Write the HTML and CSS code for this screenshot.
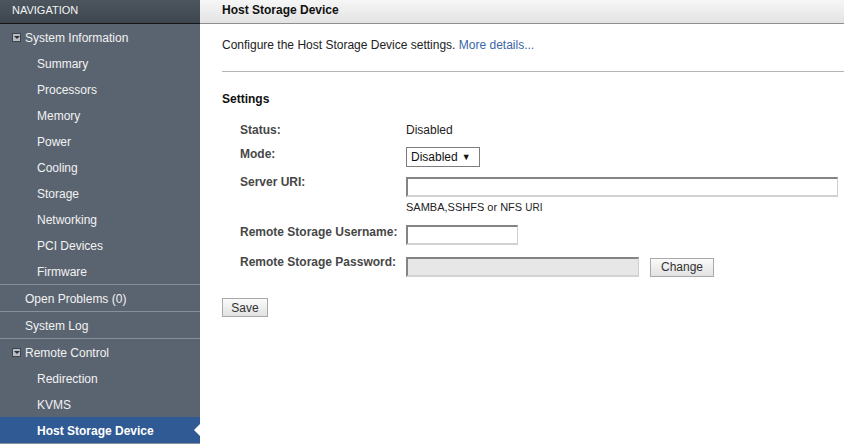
FILE: index.html
```html
<!DOCTYPE html>
<html lang="en">
<head>
<meta charset="utf-8">
<title>Host Storage Device</title>
<link rel="stylesheet" href="styles.css">
</head>
<body>
<div class="app">
  <aside class="sidebar">
    <div class="nav-header">NAVIGATION</div>
    <ul class="nav">
      <li class="nav-group">
        <div class="nav-item top"><span class="toggle"></span>System Information</div>
        <div class="nav-item sub">Summary</div>
        <div class="nav-item sub">Processors</div>
        <div class="nav-item sub">Memory</div>
        <div class="nav-item sub">Power</div>
        <div class="nav-item sub">Cooling</div>
        <div class="nav-item sub">Storage</div>
        <div class="nav-item sub">Networking</div>
        <div class="nav-item sub">PCI Devices</div>
        <div class="nav-item sub">Firmware</div>
      </li>
      <li class="nav-group">
        <div class="nav-item top">Open Problems (0)</div>
      </li>
      <li class="nav-group">
        <div class="nav-item top">System Log</div>
      </li>
      <li class="nav-group">
        <div class="nav-item top"><span class="toggle"></span>Remote Control</div>
        <div class="nav-item sub">Redirection</div>
        <div class="nav-item sub">KVMS</div>
        <div class="nav-item sub active">Host Storage Device</div>
      </li>
    </ul>
  </aside>
  <main class="main">
    <div class="page-header">Host Storage Device</div>
    <div class="content">
      <p class="intro">Configure the Host Storage Device settings. <a class="link" href="#">More details...</a></p>
      <hr class="rule">
      <h2 class="section-title">Settings</h2>
      <div class="form">
        <div class="row">
          <div class="label">Status:</div>
          <div class="value">Disabled</div>
        </div>
        <div class="row">
          <div class="label">Mode:</div>
          <div class="value"><button class="select" type="button">Disabled <span class="caret">&#9660;</span></button></div>
        </div>
        <div class="row">
          <div class="label label-up">Server URI:</div>
          <div class="value">
            <input class="field field-uri" type="text">
            <div class="hint">SAMBA,SSHFS or NFS <span class="hint-small">URI</span></div>
          </div>
        </div>
        <div class="row row-user">
          <div class="label">Remote Storage Username:</div>
          <div class="value"><input class="field field-user" type="text"></div>
        </div>
        <div class="row row-pass">
          <div class="label label-up">Remote Storage Password:</div>
          <div class="value inline">
            <input class="field field-pass" type="password" disabled>
            <button class="btn" type="button">Change</button>
          </div>
        </div>
      </div>
      <button class="btn btn-save" type="button">Save</button>
    </div>
  </main>
</div>
</body>
</html>
```

FILE: styles.css
```css
* { box-sizing: border-box; }
html, body { margin: 0; padding: 0; }
body {
  font-family: "Liberation Sans", Arial, sans-serif;
  font-size: 12px;
  color: #222;
  background: #fff;
  overflow: hidden;
}
.app {
  display: flex;
  height: 444px;
  width: 844px;
}

/* Sidebar */
.sidebar {
  width: 200px;
  flex: none;
  background: #5a6471;
  color: #f2f2f2;
}
.nav-header {
  height: 24px;
  padding-left: 12px;
  line-height: 21px;
  font-size: 11px;
  color: #f4f4f4;
  background: linear-gradient(#4d555e, #3d454e);
  border-bottom: 1px solid #151515;
}
.nav {
  list-style: none;
  margin: 0;
  padding: 0;
}
.nav-group {
  border-bottom: 1px solid #87909a;
}
.nav-item {
  height: 26px;
  padding-top: 2px;
  white-space: nowrap;
  display: flex;
  align-items: center;
}
.nav-item.top {
  padding-left: 25px;
  position: relative;
}
.nav-item.sub {
  padding-left: 37px;
}
.toggle {
  position: absolute;
  left: 12px;
  top: 9px;
  width: 9px;
  height: 9px;
  background: #b9bdc2;
  border: 1px solid #3e454d;
}
.toggle::after {
  content: "";
  position: absolute;
  left: 1px;
  top: 2px;
  border-left: 3px solid transparent;
  border-right: 3px solid transparent;
  border-top: 3px solid #2c3238;
}
.nav-item.active {
  background: #2f5a94;
  font-weight: bold;
  color: #fff;
  position: relative;
}
.nav-item.active::after {
  content: "";
  position: absolute;
  right: 0;
  top: 7px;
  border-top: 6px solid transparent;
  border-bottom: 6px solid transparent;
  border-right: 6px solid #fff;
}

/* Main */
.main {
  flex: 1;
  min-width: 0;
}
.page-header {
  height: 24px;
  padding-left: 22px;
  line-height: 20px;
  font-weight: bold;
  color: #111;
  background: linear-gradient(#f6f6f6, #e3e3e3);
  border-bottom: 1px solid #8f8f8f;
}
.content {
  padding-left: 22px;
}
.intro {
  margin: 14px 0 0;
  line-height: 14px;
}
.link {
  color: #3c66a6;
  text-decoration: none;
}
.rule {
  margin: 19px 0 0;
  border: 0;
  border-top: 1px solid #b4b4b4;
  height: 0;
}
.section-title {
  margin: 20px 0 0;
  font-size: 12px;
  line-height: 14px;
  font-weight: bold;
  color: #111;
}
.form {
  display: flex;
  flex-direction: column;
  gap: 10px;
  margin-top: 17px;
  padding-left: 18px;
}
.row {
  display: flex;
  align-items: flex-start;
}
.row-user { margin-top: 1px; }
.row-pass { margin-top: 2px; }
.label {
  width: 166px;
  flex: none;
  font-weight: bold;
  color: #474747;
  line-height: 14px;
}
.label-up { margin-top: -2px; }
.value {
  line-height: 14px;
}
.value.inline {
  display: flex;
  align-items: center;
  gap: 11px;
}
.select {
  height: 20px;
  width: 74px;
  padding: 0 4px;
  margin: 0;
  font: inherit;
  color: #111;
  background: #fff;
  border: 1px solid #7d7d7d;
  text-align: left;
  display: flex;
  align-items: center;
  gap: 4px;
}
.caret {
  font-size: 9px;
}
.field {
  display: block;
  height: 20px;
  margin: 0;
  padding: 0 3px;
  font: inherit;
  background: #fff;
  border-style: solid;
  border-width: 2px 1px 2px 2px;
  border-color: #848484 #cfcfcf #d2d2d2 #848484;
}
.field-uri { width: 432px; }
.field-user { width: 112px; }
.field-pass { width: 233px; background: #e7e7e7; }
.hint {
  margin-top: 4px;
  font-size: 11px;
  line-height: 12px;
  color: #222;
}
.hint-small { font-size: 10px; }
.btn {
  height: 19px;
  padding: 0 10px;
  margin: 0;
  font: inherit;
  color: #333;
  background: linear-gradient(#fafafa, #e2e2e2);
  border: 1px solid #a9a9a9;
}
.btn-save {
  display: block;
  margin-top: 21px;
  width: 46px;
  padding: 0;
}
```
